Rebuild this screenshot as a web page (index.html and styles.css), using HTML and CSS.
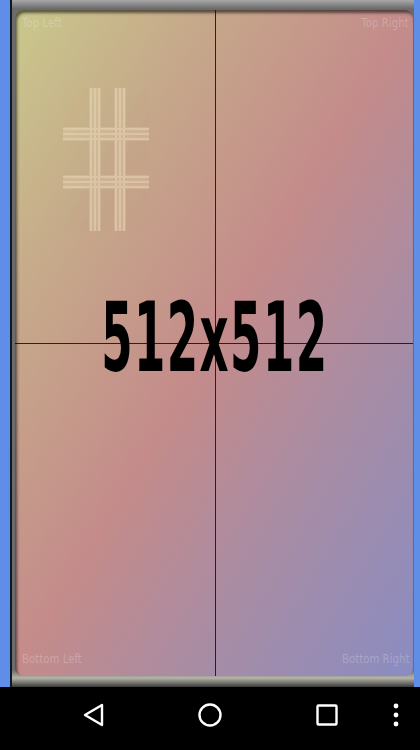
FILE: index.html
```html
<!DOCTYPE html>
<html>
<head>
<meta charset="utf-8">
<link rel="stylesheet" href="styles.css">
</head>
<body>
<div class="screen">
  <div class="edge edge-left"></div>
  <div class="frame">
    <div class="card">
      <div class="cross-v"></div>
      <div class="cross-h"></div>
      <svg class="hash" width="86" height="143" viewBox="0 0 86 143">
        <g fill="#efe0c0" opacity="0.38">
          <rect x="27" y="0" width="2" height="143"/><rect x="31" y="0" width="2" height="143"/><rect x="35" y="0" width="2" height="143"/>
          <rect x="52" y="0" width="2" height="143"/><rect x="56" y="0" width="2" height="143"/><rect x="60" y="0" width="2" height="143"/>
          <rect x="0" y="40" width="86" height="2"/><rect x="0" y="45" width="86" height="2"/><rect x="0" y="50" width="86" height="2"/>
          <rect x="0" y="88" width="86" height="2"/><rect x="0" y="93" width="86" height="2"/><rect x="0" y="98" width="86" height="2"/>
        </g>
        <g fill="#efe0c0" opacity="0.22">
          <rect x="26" y="0" width="12" height="143"/><rect x="51" y="0" width="12" height="143"/>
          <rect x="0" y="39" width="86" height="14"/><rect x="0" y="87" width="86" height="14"/>
        </g>
      </svg>
      <div class="row row-top">
        <span class="corner left">Top Left</span>
        <span class="corner right">Top Right</span>
      </div>
      <div class="center">
        <span class="big">512x512</span>
      </div>
      <div class="row row-bottom">
        <span class="corner left">Bottom Left</span>
        <span class="corner right">Bottom Right</span>
      </div>
    </div>
  </div>
  <div class="edge edge-right"></div>
</div>
<nav class="navbar">
  <svg class="nav-icon back" width="26" height="26" viewBox="0 0 26 26">
    <path d="M21 3 L4 13 L21 23 Z" fill="none" stroke="#fff" stroke-width="2.4" stroke-linejoin="round"/>
  </svg>
  <svg class="nav-icon home" width="26" height="26" viewBox="0 0 26 26">
    <circle cx="13" cy="13" r="10.5" fill="none" stroke="#fff" stroke-width="2.4"/>
  </svg>
  <svg class="nav-icon recent" width="26" height="26" viewBox="0 0 26 26">
    <rect x="3.5" y="3.5" width="19" height="19" rx="1" fill="none" stroke="#fff" stroke-width="2.4"/>
  </svg>
  <svg class="nav-icon more" width="8" height="26" viewBox="0 0 8 26">
    <circle cx="4" cy="4" r="2.4" fill="#fff"/>
    <circle cx="4" cy="13" r="2.4" fill="#fff"/>
    <circle cx="4" cy="22" r="2.4" fill="#fff"/>
  </svg>
</nav>
</body>
</html>
```
FILE: styles.css
```css
html, body {
  margin: 0;
  padding: 0;
  background: #000;
  width: 420px;
  height: 750px;
  overflow: hidden;
  font-family: "DejaVu Sans", sans-serif;
}
.screen {
  display: flex;
  height: 687px;
  width: 420px;
}
.edge {
  background: #5f8ee6;
  flex-shrink: 0;
}
.edge-left {
  width: 10px;
  border-right: 2px solid #101828;
}
.edge-right {
  width: 6px;
}
.frame {
  flex: 1;
  min-width: 0;
  padding: 10px 1px 11px 3px;
  background: linear-gradient(to bottom, #a8a8a8 0px, #6a6a6a 9px, #6c6c6c 670px, #b4b4a8 678px, #3a3a3a 687px);
  display: flex;
}
.card {
  flex: 1;
  min-width: 0;
  position: relative;
  border-radius: 8px;
  overflow: hidden;
  display: flex;
  flex-direction: column;
  justify-content: space-between;
  background: linear-gradient(to bottom right, #c9c88c 0%, #c6a88a 24%, #c48b8a 50%, #a88ca4 72%, #8a8cc2 100%);
  box-shadow: inset 2px 3px 3px rgba(0,0,0,0.55);
}
.cross-v {
  position: absolute;
  left: 200px;
  top: 0;
  bottom: 0;
  width: 1px;
  background: rgba(20, 10, 10, 0.85);
}
.cross-h {
  position: absolute;
  top: 333px;
  left: 0;
  right: 0;
  height: 1px;
  background: rgba(20, 10, 10, 0.85);
}
.hash {
  position: absolute;
  left: 48px;
  top: 78px;
}
.row {
  display: flex;
  justify-content: space-between;
  padding: 0 4px 0 7px;
  position: relative;
}
.row-top {
  padding-top: 6px;
}
.row-bottom {
  padding-bottom: 10px;
}
.corner {
  font-family: "DejaVu Sans", sans-serif;
  font-size: 12px;
  color: rgba(255, 255, 255, 0.22);
  white-space: nowrap;
  transform: scaleX(0.85);
}
.corner.left { transform-origin: left center; }
.corner.right { transform-origin: right center; }
.center {
  display: flex;
  justify-content: center;
  position: relative;
}
.big {
  font-family: "DejaVu Sans", sans-serif;
  font-weight: bold;
  font-size: 96px;
  line-height: 1;
  color: #000;
  display: inline-block;
  white-space: nowrap;
  transform: scaleX(0.47);
  margin-top: -6px;
  margin-left: 2px;
  letter-spacing: 3px;
}
.navbar {
  height: 63px;
  position: relative;
}
.nav-icon {
  position: absolute;
  top: 15px;
}
.back { left: 81px; }
.home { left: 197px; }
.recent { left: 314px; }
.more { left: 392px; }
```
